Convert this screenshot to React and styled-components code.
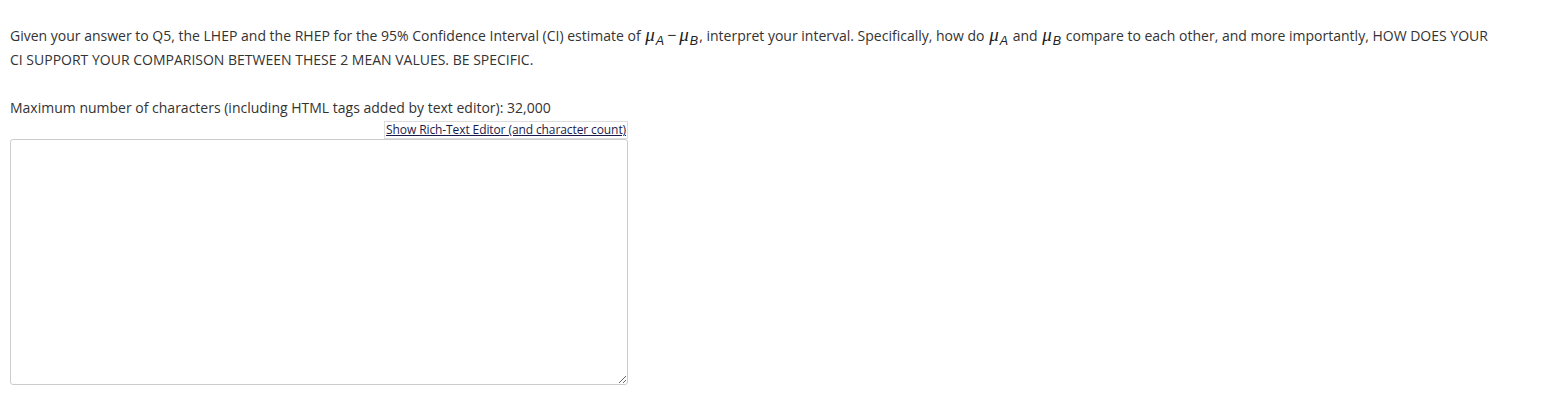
import React from "react";
import styled, { createGlobalStyle } from "styled-components";

const Global = createGlobalStyle`
  body {
    margin: 0;
    background: #fff;
    font-family: "Open Sans", "Liberation Sans", sans-serif;
    color: #333;
  }
`;

const Page = styled.div`
  padding: 24px 10px 0 10px;
`;

const Question = styled.p`
  margin: 0;
  font-size: 14px;
  line-height: 24px;
  max-width: 1480px;
`;

const Mu = styled.span`
  font-family: "Liberation Serif", "DejaVu Serif", serif;
  font-style: italic;
  font-size: 19px;
  line-height: 0;
  color: #222;
  margin: 0 0 0 1px;
`;

const Sub = styled.span`
  font-family: "Liberation Sans", sans-serif;
  font-style: italic;
  font-size: 12.5px;
  line-height: 0;
  position: relative;
  top: 4px;
  margin-left: 1px;
  margin-right: 1px;
  color: #222;
`;

const Minus = styled.span`
  font-size: 16px;
  line-height: 0;
  margin: 0 2px;
`;

const Limit = styled.div`
  margin-top: 26px;
  font-size: 14px;
  line-height: 20px;
`;

const Editor = styled.div`
  width: 618px;
  display: flex;
  flex-direction: column;
  align-items: flex-end;
`;

const Toggle = styled.button`
  margin: 3px 0 0 0;
  padding: 0 1px;
  border: 1px solid #ddd;
  background: #fff;
  font-family: "Open Sans", sans-serif;
  font-size: 12px;
  letter-spacing: -0.1px;
  line-height: 16px;
  height: 18px;
  color: #1a1a4a;
  text-decoration: underline;
  cursor: pointer;
`;

const Box = styled.textarea`
  box-sizing: border-box;
  width: 618px;
  height: 246px;
  margin: 0;
  border: 1px solid #ccc;
  border-radius: 3px;
  font-family: "Open Sans", sans-serif;
  font-size: 13px;
  resize: both;
`;

const M = ({ s }) => (
  <>
    <Mu>μ</Mu>
    <Sub>{s}</Sub>
  </>
);

export default function App() {
  return (
    <Page>
      <Global />
      <Question>
        Given your answer to Q5, the LHEP and the RHEP for the 95% Confidence
        Interval (CI) estimate of <M s="A" />
        <Minus>−</Minus>
        <M s="B" />, interpret your interval. Specifically, how do <M s="A" />{" "}
        and <M s="B" /> compare to each other, and more importantly, HOW DOES
        YOUR CI SUPPORT YOUR COMPARISON BETWEEN THESE 2 MEAN VALUES. BE
        SPECIFIC.
      </Question>
      <Limit>
        Maximum number of characters (including HTML tags added by text
        editor): 32,000
      </Limit>
      <Editor>
        <Toggle>Show Rich-Text Editor (and character count)</Toggle>
        <Box />
      </Editor>
    </Page>
  );
}
